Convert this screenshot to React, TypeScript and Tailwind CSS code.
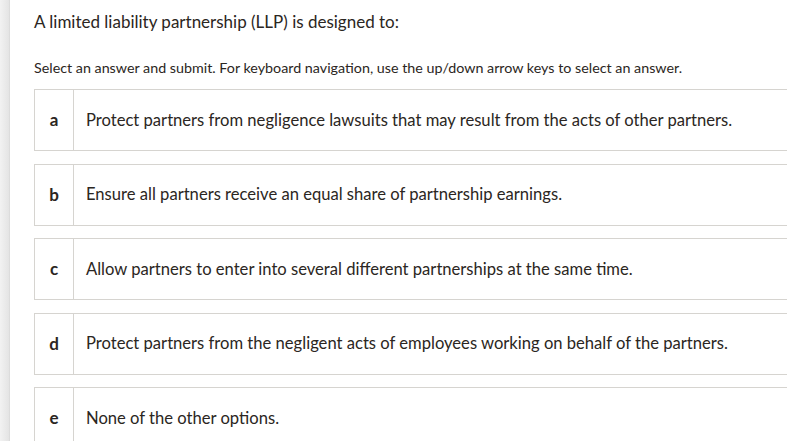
const options = [
  { key: "a", text: "Protect partners from negligence lawsuits that may result from the acts of other partners." },
  { key: "b", text: "Ensure all partners receive an equal share of partnership earnings." },
  { key: "c", text: "Allow partners to enter into several different partnerships at the same time." },
  { key: "d", text: "Protect partners from the negligent acts of employees working on behalf of the partners." },
  { key: "e", text: "None of the other options." },
];

export default function App() {
  return (
    <div className="flex h-[441px] w-[790px] overflow-hidden bg-white font-['Lato',sans-serif] text-[#2b2622]">
      <div className="w-[10px] shrink-0 bg-gradient-to-r from-[#f2f2f2] to-[#e4e4e4] border-r border-[#dcdcdc]" />
      <div className="flex flex-1 flex-col pl-[24px] pr-[3px]">
        <h1 className="mt-[9px] text-[17px] leading-[26px]">A limited liability partnership (LLP) is designed to:</h1>
        <p className="mt-[24px] text-[14.3px] leading-[18px]">
          Select an answer and submit. For keyboard navigation, use the up/down arrow keys to select an answer.
        </p>
        <div className="mt-[12px] flex flex-col gap-[12.5px]">
          {options.map((o) => (
            <div key={o.key} className="flex h-[62px] shrink-0 border-y border-l border-[#d6d4d0]">
              <div className="flex w-[39px] shrink-0 items-center justify-center border-r border-[#d6d4d0] text-[17px] font-bold">
                {o.key}
              </div>
              <div className="flex items-center pl-[12px] text-[16.6px]">{o.text}</div>
            </div>
          ))}
        </div>
      </div>
    </div>
  );
}
